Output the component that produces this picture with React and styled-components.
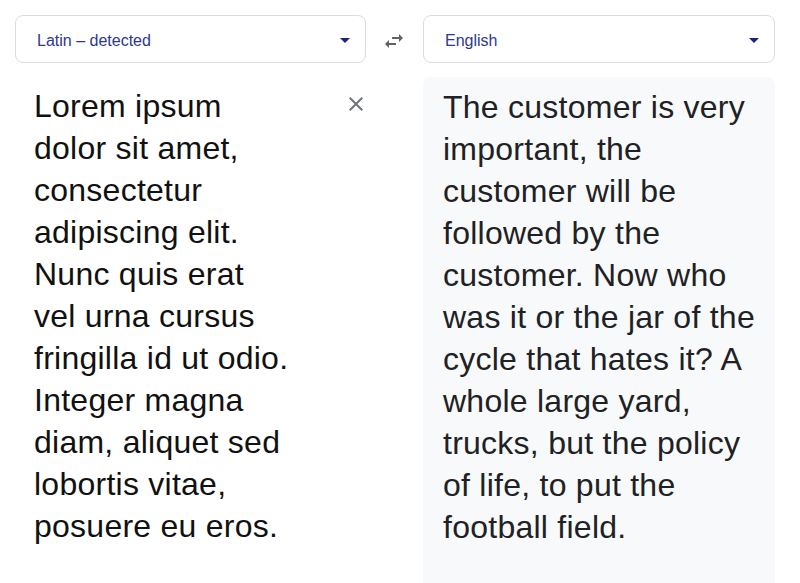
import React from 'react'
import styled, { createGlobalStyle } from 'styled-components'

const GlobalStyle = createGlobalStyle`
    html, body {
        margin: 0;
        padding: 0;
        background: #ffffff;
        overflow: hidden;
    }
    body {
        font-family: "Liberation Sans", Arial, Helvetica, sans-serif;
    }
`

const Page = styled.div`
    display: grid;
    grid-template-columns: 351px 57px 352px;
    grid-template-rows: 48px auto;
    row-gap: 14px;
    padding: 15px 25px 0 15px;
    height: 583px;
    box-sizing: border-box;
`

const LangSelect = styled.button`
    display: flex;
    align-items: center;
    justify-content: space-between;
    height: 48px;
    padding: 3px 15px 0 21px;
    border: 1px solid #dadce0;
    border-radius: 8px;
    background: #ffffff;
    font-family: "Liberation Sans", Arial, Helvetica, sans-serif;
    font-size: 16px;
    color: #2c3795;
    cursor: pointer;
    text-align: left;
`

const Caret = styled.svg`
    width: 24px;
    height: 24px;
    margin-right: -7px;
    margin-top: -1px;
    fill: #1a237e;
`

const SwapButton = styled.div`
    display: flex;
    align-items: center;
    justify-content: center;
    padding: 3px 1px 0 0;
    color: #5f6368;
`

const SourcePanel = styled.div`
    display: flex;
    align-items: flex-start;
    padding: 8px 0 0 19px;
`

const PanelText = styled.div`
    font-size: 32px;
    line-height: 42px;
    letter-spacing: 0.25px;
    color: ${props => props.color};
    width: ${props => props.width}px;
`

const ClearButton = styled.div`
    margin-left: auto;
    margin-right: -2px;
    margin-top: 7px;
    width: 24px;
    height: 24px;
    color: #70757a;
`

const TargetPanel = styled.div`
    grid-column: 3;
    background: #f8f9fa;
    border-radius: 8px 8px 0 0;
    padding: 9px 14px 0 20px;
    height: 520px;
`

const Icon = ({ d, size = 24 }) => (
    <svg width={size} height={size} viewBox="0 0 24 24" fill="currentColor">
        <path d={d} />
    </svg>
)

const Select = ({ label }) => (
    <LangSelect>
        <span>{label}</span>
        <Caret viewBox="0 0 24 24"><path d="M7 10l5 5 5-5z" /></Caret>
    </LangSelect>
)

const App = () => {
    return (
        <>
            <GlobalStyle />
            <Page>
                <Select label="Latin – detected" />
                <SwapButton>
                    <Icon d="M6.99 11L3 15l3.99 4v-3H14v-2H6.99v-3zM21 9l-3.99-4v3H10v2h7.01v3L21 9z" />
                </SwapButton>
                <Select label="English" />

                <SourcePanel>
                    <PanelText width={258} color="#111111">
                        Lorem ipsum dolor sit amet, consectetur adipiscing elit. Nunc quis erat vel urna cursus fringilla id ut odio. Integer magna diam, aliquet sed lobortis vitae, posuere eu eros.
                    </PanelText>
                    <ClearButton>
                        <Icon d="M19 6.41L17.59 5 12 10.59 6.41 5 5 6.41 10.59 12 5 17.59 6.41 19 12 13.41 17.59 19 19 17.59 13.41 12z" />
                    </ClearButton>
                </SourcePanel>
                <TargetPanel>
                    <PanelText width={316} color="#202124">
                        The customer is very important, the customer will be followed by the customer. Now who was it or the jar of the cycle that hates it? A whole large yard, trucks, but the policy of life, to put the football field.
                    </PanelText>
                </TargetPanel>
            </Page>
        </>
    )
}

export default App
